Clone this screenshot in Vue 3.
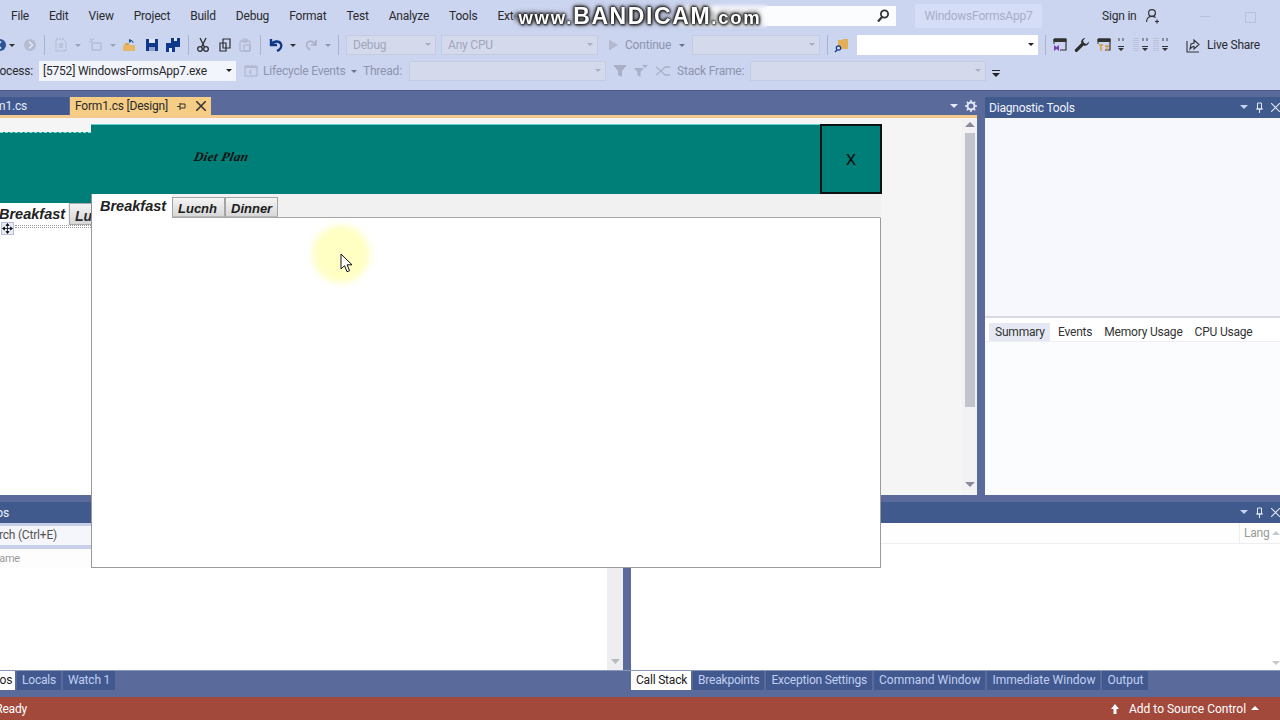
<script setup>
const menus = ['File', 'Edit', 'View', 'Project', 'Build', 'Debug', 'Format', 'Test', 'Analyze', 'Tools', 'Extensions']
const rightTabs = ['Breakpoints', 'Exception Settings', 'Command Window', 'Immediate Window', 'Output']
</script>

<template>
  <div class="ide">
    <header class="menu">
      <span v-for="m in menus" :key="m" class="menu-item">{{ m }}</span>
      <div class="search"><span>Search (Ctrl+Q)</span>
        <svg width="14" height="14" viewBox="0 0 14 14" class="mag"><circle cx="8.5" cy="5" r="3.6" fill="none" stroke="#333" stroke-width="1.8"/><path d="M6 8 2 12.5" stroke="#333" stroke-width="2.2"/></svg>
      </div>
      <div class="sol">WindowsFormsApp7</div>
      <span class="signin">Sign in</span>
      <svg width="16" height="16" viewBox="0 0 16 16" class="person"><circle cx="7" cy="5" r="3.4" fill="none" stroke="#333" stroke-width="1.2"/><path d="M1.5 14c0-4 2.5-5.6 5.5-5.6 1.5 0 2.8.4 3.6 1.2M12 11.5v4M10 13.5h4" fill="none" stroke="#333" stroke-width="1.2"/></svg>
      <span class="win-min"></span>
      <span class="win-max"></span>
    </header>

    <div class="tb">
      <svg width="16" height="16" viewBox="0 0 16 16" class="i-back"><circle cx="8" cy="8" r="6" fill="#2f5597"/><path d="M9 4.5 5.5 8 9 11.5" fill="none" stroke="#dfe6f8" stroke-width="1.6"/></svg>
      <svg width="8" height="16" viewBox="0 0 8 16"><path d="M1 7h6l-3 3z" fill="#333"/></svg>
      <svg width="16" height="16" viewBox="0 0 16 16" class="m6"><circle cx="8" cy="8" r="6" fill="#b4bbd0"/><path d="M7 4.5 10.5 8 7 11.5" fill="none" stroke="#dfe6f8" stroke-width="1.6"/></svg>
      <i class="sep m6"></i>
      <svg width="16" height="16" viewBox="0 0 16 16" class="m8"><path d="M3 2h7l3 3v9H3z" fill="none" stroke="#a9b0c6" stroke-dasharray="2 1"/><path d="M6 6h4v5H6z" fill="#bcc3d8"/></svg>
      <svg width="8" height="16" viewBox="0 0 8 16" class="m5"><path d="M1 7h6l-3 3z" fill="#9aa1b8"/></svg>
      <svg width="16" height="16" viewBox="0 0 16 16" class="m6"><path d="M4 6h9v7H4z" fill="none" stroke="#a9b0c6"/><path d="M2 2l3 3M5 1v2M1 5h2" stroke="#a9b0c6"/></svg>
      <svg width="8" height="16" viewBox="0 0 8 16" class="m5"><path d="M1 7h6l-3 3z" fill="#9aa1b8"/></svg>
      <svg width="16" height="16" viewBox="0 0 16 16" class="m4"><path d="M2 8h12v6H2z" fill="#e8b766"/><path d="M4 6h4v2H4z" fill="#d9a24e"/><path d="M8 6V2l3 2z" fill="#1f4f96"/><path d="M8 3c3 0 4 1 4 3" stroke="#1f4f96" fill="none"/></svg>
      <svg width="16" height="16" viewBox="0 0 16 16" class="m7"><path d="M2 2h12v12H2z" fill="#10388a"/><path d="M5 2h6v4H5z" fill="#e0e6f6"/><path d="M5 10h6v4H5z" fill="#8fa2cf"/></svg>
      <svg width="16" height="16" viewBox="0 0 16 16" class="m5"><path d="M6 1h9v9H6z" fill="#10388a"/><path d="M9 1h3v3H9z" fill="#e0e6f6"/><path d="M1 6h9v9H1z" fill="#10388a"/><path d="M4 11h3v4H4z" fill="#e0e6f6"/></svg>
      <i class="sep m7"></i>
      <svg width="16" height="16" viewBox="0 0 16 16" class="m6"><path d="M5 1l4.5 9M11 1 6.500 10" stroke="#2c2c30" stroke-width="1.3" fill="none"/><circle cx="5" cy="12" r="2.300" fill="none" stroke="#2c2c30" stroke-width="1.300"/><circle cx="11" cy="12" r="2.300" fill="none" stroke="#2c2c30" stroke-width="1.300"/></svg>
      <svg width="16" height="16" viewBox="0 0 16 16" class="m6"><path d="M6 2h7v9H6zM3 6h6v8H3z" fill="#ccd5f0" stroke="#2c2c30" stroke-width="1.200"/></svg>
      <svg width="16" height="16" viewBox="0 0 16 16" class="m4"><path d="M3 4h10v10H3zM6 2h4v3H6zM7 8h6v6H7z" fill="none" stroke="#a9b0c6"/></svg>
      <i class="sep m7"></i>
      <svg width="16" height="16" viewBox="0 0 16 16" class="m7"><path d="M3 2v6h6M3.500 8C5 4 11 3 13 7c1 2.500-.5 5.500-4 7" fill="none" stroke="#10388a" stroke-width="2.400"/></svg>
      <svg width="8" height="16" viewBox="0 0 8 16" class="m5"><path d="M1 7h6l-3 3z" fill="#333"/></svg>
      <svg width="16" height="16" viewBox="0 0 16 16" class="m6"><path d="M13 3v5H8M12.500 8C11 4 6 3 4 6c-1 2 0 5 3 7" fill="none" stroke="#a9b0c6" stroke-width="1.600"/></svg>
      <svg width="8" height="16" viewBox="0 0 8 16" class="m5"><path d="M1 7h6l-3 3z" fill="#8b92a8"/></svg>
      <i class="sep m6"></i>
      <div class="combo off m7 w90"><span>Debug</span><svg width="6" height="4" viewBox="0 0 6 4"><path d="M0 0h6L3 3z" fill="#a9b0c6"/></svg></div>
      <div class="combo off m5 w157"><span>Any CPU</span><svg width="6" height="4" viewBox="0 0 6 4"><path d="M0 0h6L3 3z" fill="#a9b0c6"/></svg></div>
      <svg width="16" height="16" viewBox="0 0 16 16" class="m7"><path d="M4 2.500 13 8l-9 5.500z" fill="#b3bacf"/></svg>
      <span class="txt off-t m4 w48">Continue</span>
      <svg width="8" height="16" viewBox="0 0 8 16" class="m5"><path d="M1 7h6l-3 3z" fill="#6c7389"/></svg>
      <div class="combo off m6 w128"><span></span><svg width="6" height="4" viewBox="0 0 6 4"><path d="M0 0h6L3 3z" fill="#a9b0c6"/></svg></div>
      <i class="sep m7"></i>
      <svg width="16" height="16" viewBox="0 0 16 16" class="m6"><path d="M4 3h4l1-1h5v10H4z" fill="#e3ae58"/><circle cx="4.500" cy="11" r="2.200" fill="#ccd5f0" stroke="#10388a" stroke-width="1.200"/><path d="M3 13 1 15" stroke="#10388a" stroke-width="1.500"/></svg>
      <div class="combo white m7 w181"><span></span><svg width="6" height="4" viewBox="0 0 6 4"><path d="M0 0h6L3 3z" fill="#222"/></svg></div>
      <i class="sep m7"></i>
      <svg width="16" height="16" viewBox="0 0 16 16" class="m6"><path d="M2 2h12v11H8" fill="none" stroke="#333" stroke-width="1.200"/><path d="M2 2h12v2.500H2zM2 2v5" fill="#333" stroke="#333"/><path d="M2 8l2.500 2L7 8v6l-2.500-2L2 14z" fill="#7a3fb5"/></svg>
      <svg width="16" height="16" viewBox="0 0 16 16" class="m6"><path d="M15 4.500a4.200 4.200 0 0 1-5.500 4L3.500 14.500a1.600 1.600 0 0 1-2.300-2.300l6-6A4.200 4.200 0 0 1 11.500 1L9 3.500 10 6l2.500 1z" fill="#2c2c30"/></svg>
      <svg width="16" height="16" viewBox="0 0 16 16" class="m6"><path d="M2 2h12v11H9" fill="none" stroke="#333" stroke-width="1.200"/><path d="M2 2h12v2.500H2zM2 2v5" fill="#333" stroke="#333"/><path d="M3 8h4M5 8v6M9 9h4M11 9v5" stroke="#d99b3a" stroke-width="1.400"/></svg>
      <svg width="8" height="16" viewBox="0 0 8 16" class="m5"><path d="M2 1v3M6 1v3" stroke="#444"/><path d="M1 9h6v1H1zM1 11h6l-3 3z" fill="#333"/></svg>
      <svg width="16" height="16" viewBox="0 0 16 16" class="m8"><path d="M1 1v13M3 1v13M5 1v13" stroke="#a9b0c6" stroke-dasharray="1 1"/><path d="M10 1v3M14 1v3" stroke="#444"/><path d="M9 9h6v1H9zM9 11h6l-3 3z" fill="#333"/></svg>
      <svg width="16" height="16" viewBox="0 0 16 16" class="m4"><path d="M1 1v13M3 1v13M5 1v13" stroke="#a9b0c6" stroke-dasharray="1 1"/><path d="M10 1v3M14 1v3" stroke="#444"/><path d="M9 9h6v1H9zM9 11h6l-3 3z" fill="#333"/></svg>
      <svg width="16" height="16" viewBox="0 0 16 16" class="m16"><path d="M2 4v11h12M5 12l1-5 3-1V3l5 4.500L9 12V9.500L7 10z" fill="none" stroke="#333" stroke-width="1.100"/></svg>
      <span class="txt m6">Live Share</span>
    </div>

    <div class="tb">
      <span class="clip-l w33">Process:</span>
      <div class="combo proc m6 w197"><span>[5752] WindowsFormsApp7.exe</span><svg width="6" height="4" viewBox="0 0 6 4"><path d="M0 0h6L3 3z" fill="#222"/></svg></div>
      <svg width="16" height="16" viewBox="0 0 16 16" class="m7"><path d="M2 3h12v10H2z" fill="none" stroke="#a9b0c6"/><path d="M2 3h12v2H2z" fill="#b3bacf"/><path d="M9 7 6 9l3 2" fill="none" stroke="#a9b0c6"/></svg>
      <span class="txt off-t m4 w83">Lifecycle Events</span>
      <svg width="8" height="16" viewBox="0 0 8 16" class="m4"><path d="M1 7h6l-3 3z" fill="#6c7389"/></svg>
      <span class="txt off-t m5 w40">Thread:</span>
      <div class="combo off m6 w197"><span></span><svg width="6" height="4" viewBox="0 0 6 4"><path d="M0 0h6L3 3z" fill="#a9b0c6"/></svg></div>
      <svg width="16" height="16" viewBox="0 0 16 16" class="m6"><path d="M1 2h14L10 8v6l-4-2V8z" fill="#a9b0c6"/></svg>
      <svg width="16" height="16" viewBox="0 0 16 16" class="m5"><path d="M1 5h10L7.500 9v5l-3-2V9zM9 2h6l-3 3z" fill="#a9b0c6"/></svg>
      <svg width="16" height="16" viewBox="0 0 16 16" class="m6"><path d="M1 4l5 4 4-4 5 0M1 12l5-4 4 4h5" fill="none" stroke="#a9b0c6" stroke-width="1.300"/></svg>
      <span class="txt off-t m6 w67">Stack Frame:</span>
      <div class="combo off m6 w236"><span></span><svg width="6" height="4" viewBox="0 0 6 4"><path d="M0 0h6L3 3z" fill="#a9b0c6"/></svg></div>
      <svg width="8" height="8" viewBox="0 0 8 8" class="m6 low"><path d="M0 0h8v1H0zM0 3h8L4 7z" fill="#222"/></svg>
    </div>

    <div class="workspace">
      <div class="top-panes">
        <section class="doc">
          <div class="doc-tabs">
            <span class="dtab clip-l w69">Form1.cs</span>
            <span class="dtab-on">Form1.cs [Design]
              <svg width="9" height="9" viewBox="0 0 9 9" class="pin"><path d="M3 1v7M3 2h5v4H3M0 4.500h3" fill="none" stroke="#333"/></svg>
              <svg width="10" height="10" viewBox="0 0 9 9" class="x"><path d="m0 0 9 9M9 0 0 9" stroke="#333" stroke-width="1.400"/></svg>
            </span>
            <svg width="8" height="5" viewBox="0 0 8 5" class="doc-caret"><path d="M0 0h8L4 4z" fill="#e4e9f8"/></svg>
            <svg width="12" height="12" viewBox="0 0 12 12" class="gear"><circle cx="6" cy="6" r="3.500" fill="none" stroke="#e4e9f8" stroke-width="2"/><path d="M6 0v2M6 10v2M0 6h2M10 6h2M1.800 1.800l1.400 1.400M8.800 8.800l1.400 1.400M10.200 1.800 8.800 3.200M3.200 8.800l-1.400 1.400" stroke="#e4e9f8" stroke-width="1.500"/></svg>
          </div>
          <div class="doc-body">
            <div class="under">
              <div class="under-head"></div>
              <div class="under-tabs">
                <span class="ut-on">Breakfast</span>
                <span class="ut">Lu</span>
              </div>
              <div class="under-dash"></div>
              <svg width="13" height="13" viewBox="0 0 13 13" class="handle"><rect x=".5" y=".5" width="12" height="12" fill="#e6ebf7" stroke="#b6bfd8"/><path d="M6.500 2v9M2 6.500h9M6.500 1.500 5 3.500h3zM6.500 11.500 5 9.500h3zM1.500 6.500l2-1.500v3zM11.500 6.500l-2-1.500v3z" fill="#111" stroke="#111" stroke-width=".8"/></svg>
            </div>
            <div class="vscroll">
              <svg width="10" height="6" viewBox="0 0 10 6"><path d="M5 0l5 5H0z" fill="#8a8d97"/></svg>
              <div class="thumb"></div>
              <svg width="10" height="6" viewBox="0 0 10 6"><path d="M5 5 0 0h10z" fill="#8a8d97"/></svg>
            </div>
          </div>
        </section>
        <aside class="diag">
          <div class="pane-title"><span>Diagnostic Tools</span>
            <span class="pane-ico">
              <svg width="8" height="5" viewBox="0 0 8 5"><path d="M0 0h8L4 4z" fill="#c9d3f0"/></svg>
              <svg width="9" height="11" viewBox="0 0 9 11"><path d="M2.500 1h4v6h-4zM1 7h7M4.500 7v4" fill="none" stroke="#e4e9f8"/></svg>
              <svg width="9" height="9" viewBox="0 0 9 9"><path d="m0 0 9 9M9 0 0 9" stroke="#e4e9f8" stroke-width="1.100"/></svg>
            </span>
          </div>
          <div class="diag-top"></div>
          <div class="diag-tabs">
            <span class="dg-on">Summary</span><span>Events</span><span>Memory Usage</span><span>CPU Usage</span>
          </div>
          <div class="diag-bot"></div>
        </aside>
      </div>

      <div class="bottom-panes">
        <section class="left-pane">
          <div class="pane-title clip"><span class="clip-l w9">Autos</span></div>
          <div class="l-search"><span class="clip-l w57">Search (Ctrl+E)</span></div>
          <div class="l-head"><span class="clip-l w20">Name</span></div>
          <div class="l-body">
            <div class="l-scroll"><svg width="9" height="6" viewBox="0 0 9 6"><path d="M4.500 5 0 0h9z" fill="#b8bac2"/></svg></div>
          </div>
        </section>
        <section class="right-pane">
          <div class="pane-title"><span></span>
            <span class="pane-ico">
              <svg width="8" height="5" viewBox="0 0 8 5"><path d="M0 0h8L4 4z" fill="#c9d3f0"/></svg>
              <svg width="9" height="11" viewBox="0 0 9 11"><path d="M2.500 1h4v6h-4zM1 7h7M4.500 7v4" fill="none" stroke="#e4e9f8"/></svg>
              <svg width="9" height="9" viewBox="0 0 9 9"><path d="m0 0 9 9M9 0 0 9" stroke="#e4e9f8" stroke-width="1.100"/></svg>
            </span>
          </div>
          <div class="r-head"><span class="lang">Lang</span><svg width="8" height="5" viewBox="0 0 8 5"><path d="M4 0l4 4H0z" fill="#c6c8d0"/></svg></div>
          <div class="r-body"><svg width="8" height="5" viewBox="0 0 8 5"><path d="M4 4 0 0h8z" fill="#c6c8d0"/></svg></div>
        </section>
      </div>

      <div class="dock-tabs">
        <div class="dock-left">
          <span class="dk-on clip-l w15">Autos&nbsp;</span>
          <span class="dk">Locals</span>
          <span class="dk">Watch 1</span>
        </div>
        <div class="dock-right">
          <span class="dk-on cs">Call Stack</span>
          <span v-for="t in rightTabs" :key="t" class="dk">{{ t }}</span>
        </div>
      </div>
    </div>

    <footer class="status">
      <span class="clip-l w27">Ready</span>
      <svg width="10" height="12" viewBox="0 0 10 12" class="up"><path d="M5 1 1 6h2.500v5h3V6H9z" fill="#fff"/></svg>
      <span class="src">Add to Source Control</span>
      <svg width="8" height="5" viewBox="0 0 8 5"><path d="M4 0l4 4H0z" fill="#fff"/></svg>
    </footer>

    <div class="form">
      <div class="form-head">
        <span class="form-title">Diet Plan</span>
        <div class="form-x">x</div>
      </div>
      <div class="form-strip">
        <span class="ft-on">Breakfast</span>
        <span class="ft">Lucnh</span>
        <span class="ft">Dinner</span>
      </div>
      <div class="form-panel"></div>
    </div>

    <div class="glow"></div>
    <svg class="cursor" width="14" height="20" viewBox="0 0 14 20"><path d="M1 1v15l3.500-3.300 2.500 6 2.600-1-2.500-5.900H12z" fill="#fff" stroke="#111" stroke-width="1"/></svg>

    <div class="mark"><span class="mk-s">www.</span><span class="mk-b">BANDICAM</span><span class="mk-s">.com</span></div>
  </div>
</template>

<style>
html, body { margin: 0; background: #ccd5f0; }
</style>

<style scoped>
.ide { position: relative; width: 1280px; height: 720px; overflow: hidden; display: flex; flex-direction: column; background: #ccd5f0; font: 12px/16px Roboto, "Liberation Sans", sans-serif; letter-spacing: -.2px; color: #2a2a2e; }
svg { flex: none; display: block; }

.menu { height: 32px; display: flex; align-items: center; padding-left: 11px; gap: 20px; flex: none; position: relative; }
.menu-item { flex: none; white-space: nowrap; }
.search { position: absolute; left: 680px; top: 6px; width: 216px; height: 20px; background: #fbfcfe; display: flex; align-items: center; justify-content: space-between; padding: 0 6px 0 0; box-sizing: border-box; color: #777; }
.mag { margin-right: 0; }
.sol { position: absolute; left: 915px; top: 4px; width: 127px; height: 24px; background: #d6ddf6; color: #a6aecb; display: flex; align-items: center; justify-content: center; }
.signin { position: absolute; left: 1102px; top: 8px; }
.person { position: absolute; left: 1145px; top: 8px; }
.win-min { position: absolute; left: 1200px; top: 16px; width: 10px; height: 1px; background: #b9c1da; }
.win-max { position: absolute; left: 1245px; top: 12px; width: 9px; height: 9px; border: 1px solid #b9c1da; }

.tb { height: 26px; flex: none; display: flex; align-items: center; white-space: nowrap; }
.i-back { margin-left: -8px; }
.sep { width: 1px; height: 20px; background: #a9b2cf; flex: none; }
.m4 { margin-left: 4px; } .m5 { margin-left: 5px; } .m6 { margin-left: 6px; } .m7 { margin-left: 7px; } .m8 { margin-left: 8px; } .m16 { margin-left: 16px; }
.w9 { width: 9px; } .w15 { width: 15px; } .w20 { width: 20px; } .w27 { width: 27px; } .w33 { width: 33px; } .w40 { width: 40px; } .w48 { width: 48px; } .w57 { width: 57px; } .w67 { width: 67px; } .w69 { width: 69px; } .w83 { width: 83px; } .w90 { width: 90px; } .w128 { width: 128px; } .w157 { width: 157px; } .w181 { width: 181px; } .w197 { width: 197px; } .w236 { width: 236px; }
.clip-l { display: flex; justify-content: flex-end; white-space: nowrap; flex: none; box-sizing: border-box; }
.txt { flex: none; white-space: nowrap; }
.off-t { color: #8d94ad; }
.combo { height: 20px; flex: none; box-sizing: border-box; display: flex; align-items: center; justify-content: space-between; padding: 0 4px 0 6px; }
.combo.off { background: #d4daec; border: 1px solid #c3cbe3; color: #a0a7c0; }
.combo.white { background: #fff; }
.combo.proc { background: #f3f5fc; color: #2a2a2e; padding-left: 4px; }
.low { align-self: flex-end; margin-bottom: 6px; }

.workspace { flex: 1; display: flex; flex-direction: column; margin-top: 6px; background: #5a6a9b; border-top: 1px solid #475887; }
.top-panes { height: 404px; display: flex; gap: 8px; flex: none; }
.doc { width: 977px; display: flex; flex-direction: column; flex: none; }
.doc-tabs { height: 24px; flex: none; display: flex; align-items: flex-end; box-sizing: border-box; position: relative; border-bottom: 0; }
.dtab { height: 18px; line-height: 18px; background: #41598f; color: #e6ebfa; align-items: center; padding-right: 42px; }
.dtab-on { margin-left: 1px; height: 18px; width: 141px; padding-left: 5px; box-sizing: border-box; background: #f6cd85; display: flex; align-items: center; white-space: nowrap; }
.pin { margin-left: 9px; }
.x { margin-left: 10px; }
.doc-caret { position: absolute; left: 950px; top: 13px; }
.gear { position: absolute; left: 965px; top: 9px; }
.doc-body { flex: 1; background: #f5f5f6; border-top: 3px solid #f4c98d; display: flex; justify-content: space-between; }
.under { width: 91px; margin-top: 14px; position: relative; display: flex; flex-direction: column; background: #fff; overflow: hidden; }
.under-head { height: 70px; background: #007f78; border-top: 1px dashed #8adcd6; }
.under-tabs { height: 22px; flex: none; display: flex; background: #f1f1f1; font: italic 700 14.5px/18px "Liberation Sans", sans-serif; letter-spacing: 0; white-space: nowrap; }
.ut-on { width: 69px; flex: none; margin-left: -1px; background: #fff; padding-top: 2px; color: #222; }
.ut { flex: none; margin-left: 1px; width: 40px; padding: 3px 0 0 5px; background: linear-gradient(#f3f3f3, #d6d6d6); border: 1px solid #aaa; box-sizing: border-box; font-size: 14px; }
.under-dash { height: 3px; border-top: 1px dotted #999; border-bottom: 1px dotted #999; margin-left: 15px; box-sizing: border-box; }
.handle { position: absolute; left: 1px; top: 90px; }
.vscroll { width: 15px; box-sizing: border-box; display: flex; flex-direction: column; align-items: center; padding: 4px 0 7px; background: #f2f2f4; }
.thumb { width: 10px; margin: 5px 0 auto; height: 274px; background: #c2c4cb; }

.diag { flex: 1; display: flex; flex-direction: column; padding-top: 6px; }
.pane-title { height: 21px; flex: none; background: #415a8e; color: #f0f3fc; display: flex; align-items: center; justify-content: space-between; padding-left: 4px; box-sizing: border-box; }
.pane-title.clip { padding-left: 0; justify-content: flex-start; padding-top: 1px; }
.pane-ico { display: flex; align-items: center; gap: 7px; margin-right: 0; }
.diag-top { height: 198px; background: #f6f8fd; border-bottom: 2px solid #d8dbe3; flex: none; }
.diag-tabs { height: 24px; flex: none; background: #fff; display: flex; align-items: center; gap: 12px; padding: 4px 0 0 4px; box-sizing: border-box; color: #333; border-bottom: 1px solid #eceef4; }
.dg-on { background: #e6e9f3; padding: 1px 6px; margin-right: -4px; width: 61px; box-sizing: border-box; }
.diag-bot { flex: 1; background: #fbfcfe; }

.bottom-panes { height: 168px; flex: none; margin-top: 7px; display: flex; gap: 8px; }
.left-pane { width: 623px; display: flex; flex-direction: column; flex: none; }
.l-search { height: 26px; flex: none; box-sizing: border-box; border-top: 3px solid #c8cfe9; border-bottom: 4px solid #c8cfe9; background: #f5f6fb; color: #555; line-height: 19px; }
.l-head { height: 19px; flex: none; background: #fdfdfe; color: #999; font-size: 11px; line-height: 19px; }
.l-body { flex: 1; background: #fff; display: flex; justify-content: flex-end; }
.l-scroll { width: 16px; background: #eeeef1; display: flex; flex-direction: column; justify-content: flex-end; align-items: center; padding-bottom: 5px; box-sizing: border-box; }
.right-pane { flex: 1; display: flex; flex-direction: column; }
.r-head { height: 20px; flex: none; background: #fefefe; border-bottom: 1px solid #eceef2; display: flex; justify-content: flex-end; align-items: center; color: #999; }
.lang { width: 26px; border-left: 1px solid #eee; padding-left: 4px; overflow: hidden; white-space: nowrap; height: 20px; line-height: 20px; box-sizing: content-box; margin-right: 2px; }
.r-body { flex: 1; background: #fff; display: flex; justify-content: flex-end; align-items: flex-end; padding: 0 0 4px; }

.dock-tabs { height: 27px; flex: none; display: flex; border-top: 1px solid #8a97bd; box-sizing: border-box; }
.dock-left { width: 631px; display: flex; gap: 2px; flex: none; }
.dock-right { display: flex; gap: 2px; }
.dock-right .dk:nth-child(n+4) { letter-spacing: 0; }
.dk, .dk-on { height: 19px; line-height: 19px; flex: none; white-space: nowrap; box-sizing: border-box; }
.dk { background: #41598f; color: #c2cef2; padding: 0 5px; }
.dk-on { background: #fff; color: #222; }
.cs { padding: 0 5px; width: 60px; }

.status { height: 23px; flex: none; background: #a2493c; color: #fff; display: flex; align-items: center; }
.up { margin-left: 1083px; }
.src { margin-left: 9px; width: 117px; white-space: nowrap; letter-spacing: 0; }
.status svg:last-child { margin-left: 5px; }

.form { position: absolute; left: 91px; top: 124px; width: 791px; height: 444px; display: flex; flex-direction: column; }
.form-head { height: 70px; flex: none; background: #007f78; position: relative; border-top: 1px solid #66d0c8; box-sizing: border-box; }
.form-title { position: absolute; left: 103px; top: 24px; font: italic 700 13px/16px "Liberation Serif", serif; color: #111; letter-spacing: .4px; transform: skewX(-12deg); }
.form-x { position: absolute; right: 0; top: -1px; width: 62px; height: 70px; box-sizing: border-box; border: 2px solid #0c1212; background: #007f78; color: #111; font: 20px/64px "Liberation Sans", sans-serif; letter-spacing: 0; text-align: center; }
.form-strip { height: 24px; flex: none; width: 790px; display: flex; align-items: flex-end; background: #f1f1f1; border-bottom: 1px solid #a8a8a8; border-left: 1px solid #8e8e8e; border-right: 1px solid #f1f1f1; box-sizing: border-box; font: italic 700 13px/18px "Liberation Sans", sans-serif; letter-spacing: 0; }
.ft-on { width: 80px; height: 24px; background: #fff; padding: 3px 0 0 8px; box-sizing: border-box; margin-bottom: -1px; color: #222; font-size: 14.5px; white-space: nowrap; }
.ft { height: 20px; width: 53px; box-sizing: border-box; padding: 2px 0 0 5px; background: linear-gradient(#f4f4f4, #d8d8d8); border: 1px solid #a4a4a4; border-bottom-color: #b8b8b8; color: #1c1c1c; }
.form-panel { flex: 1; width: 790px; box-sizing: border-box; background: #fff; border: 1px solid #9a9a9a; border-top: 0; }

.glow { position: absolute; left: 312px; top: 225px; width: 58px; height: 58px; border-radius: 50%; background: #ffffc4; filter: blur(3px); }
.cursor { position: absolute; left: 340px; top: 253px; }

.mark { position: absolute; left: 513px; top: 3px; width: 254px; height: 26px; display: flex; align-items: baseline; justify-content: center; color: #fff; font-family: "Liberation Sans", sans-serif; font-weight: 700; white-space: nowrap; line-height: 26px; backdrop-filter: blur(2px); text-shadow: 0 0 2px #111, 0 0 3px #222, 1px 1px 3px #222, -1px -1px 3px #333, 0 0 6px #444; }
.mk-s { font-size: 18.5px; letter-spacing: 1.8px; }
.mk-b { font-size: 23px; letter-spacing: 1.6px; }
</style>
